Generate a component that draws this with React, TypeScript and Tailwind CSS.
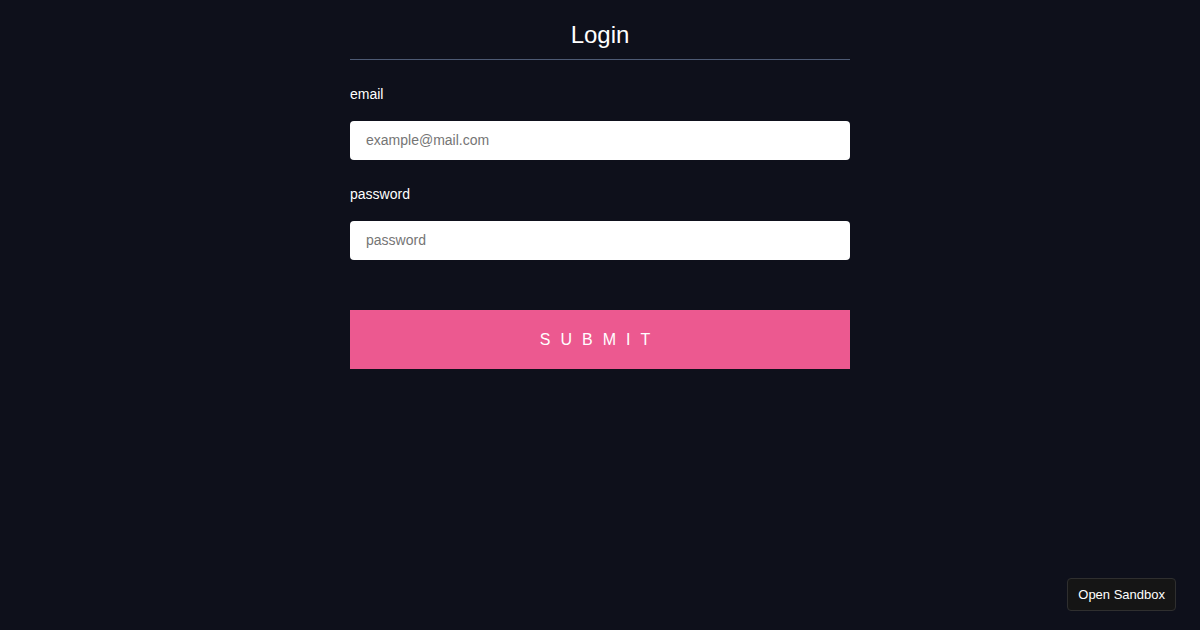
export default function App() {
  return (
    <div
      className="relative h-[630px] w-[1200px] bg-[#0e101b] text-white"
      style={{ fontFamily: '"Liberation Sans", Arial, sans-serif' }}
    >
      <div className="mx-auto w-[500px] pt-[19px]">
        {/* title */}
        <h1 className="border-b border-[#4d5a74] pb-[8px] text-center text-[24px] leading-[32px]">
          Login
        </h1>

        <form className="flex flex-col" onSubmit={(e) => e.preventDefault()}>
          <label className="mt-[24px] text-[14px] leading-[20px]">email</label>
          <input
            className="mt-[17px] h-[39px] w-full rounded-[4px] bg-white px-4 pb-px text-[14px] text-black outline-none placeholder:text-[#757575]"
            placeholder="example@mail.com"
          />

          <label className="mt-[24px] text-[14px] leading-[20px]">password</label>
          <input
            type="password"
            className="mt-[17px] h-[39px] w-full rounded-[4px] bg-white px-4 pb-px text-[14px] text-black outline-none placeholder:text-[#757575]"
            placeholder="password"
          />

          <button
            type="submit"
            className="mt-[50px] h-[59px] w-full bg-[#ec5990] text-[16px] uppercase tracking-[10px] text-white"
          >
            submit
          </button>
        </form>
      </div>

      {/* sandbox badge */}
      <button className="absolute right-[24px] bottom-[19px] h-[33px] rounded-[4px] border border-[#2f2f2f] bg-[#151515] px-[10px] text-[13px] text-white">
        Open Sandbox
      </button>
    </div>
  );
}
